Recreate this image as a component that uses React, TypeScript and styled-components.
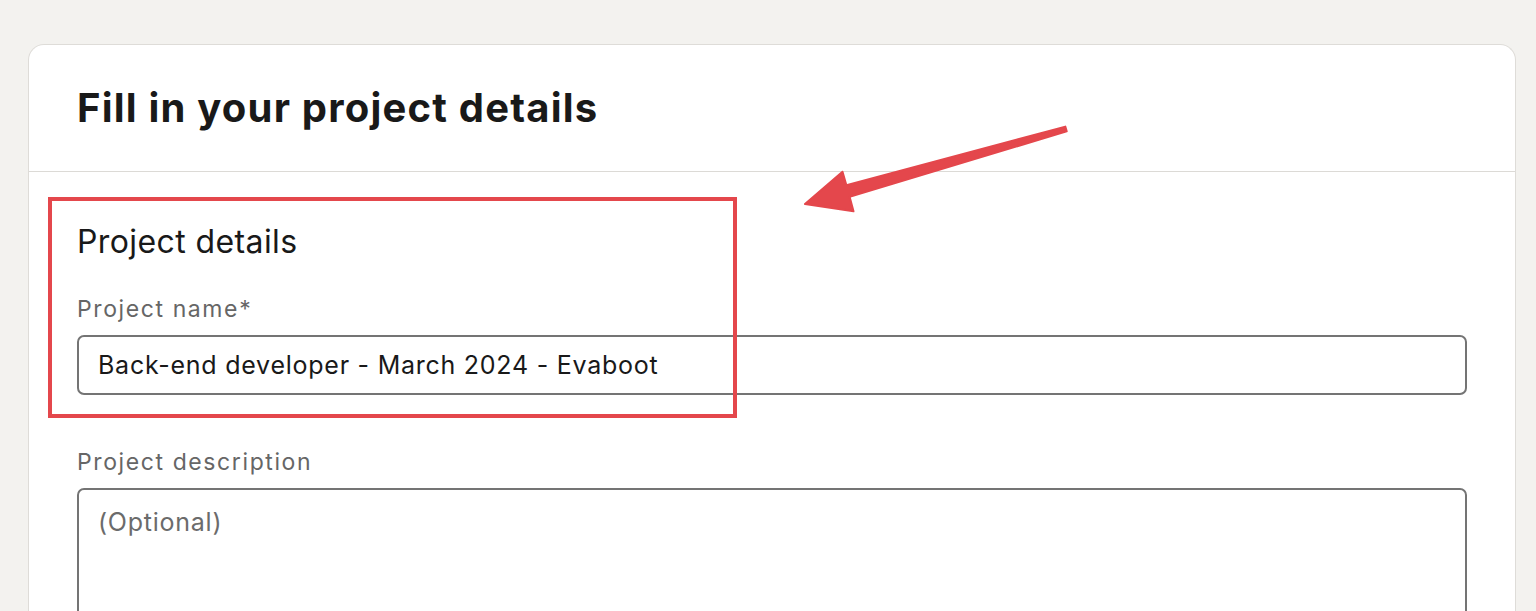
import React from 'react';
import styled, { createGlobalStyle } from 'styled-components';

const GlobalStyle = createGlobalStyle`
  html, body {
    margin: 0;
    padding: 0;
    background: #f3f2ef;
    font-family: Inter, "Noto Sans", "Liberation Sans", sans-serif;
    color: #191919;
  }
  body {
    height: 611px;
    overflow: hidden;
  }
`;

const Page = styled.div`
  position: relative;
  padding: 44px 20px 0 28px;
  height: 611px;
  box-sizing: border-box;
  overflow: hidden;
`;

const Card = styled.div`
  background: #fff;
  border: 1px solid #dedcd8;
  border-bottom: none;
  border-radius: 16px 16px 0 0;
  min-height: 100%;
  box-sizing: border-box;
  display: flex;
  flex-direction: column;
`;

const CardHeader = styled.div`
  flex: none;
  height: 126px;
  display: flex;
  align-items: center;
  padding: 0 48px;
  border-bottom: 1px solid #dcdad6;
`;

const Title = styled.h1`
  margin: 0;
  font-size: 40px;
  line-height: 48px;
  font-weight: 700;
  letter-spacing: 1.2px;
  color: #191919;
`;

const CardBody = styled.div`
  padding: 50px 48px 0 48px;
  display: flex;
  flex-direction: column;
`;

const SectionTitle = styled.h2`
  margin: 0;
  font-size: 32px;
  line-height: 40px;
  font-weight: 400;
  letter-spacing: 0.4px;
  color: #191919;
`;

const Label = styled.label<{ $top: number }>`
  display: block;
  margin-top: ${(p) => p.$top}px;
  font-size: 23px;
  line-height: 28px;
  letter-spacing: 1.6px;
  color: #666666;
`;

const Field = styled.div<{ $height: number }>`
  flex: none;
  margin-top: 12px;
  height: ${(p) => p.$height}px;
  border: 2px solid #747474;
  border-radius: 7px;
  box-sizing: border-box;
  padding: 0 19px;
  display: flex;
  align-items: ${(p) => (p.$height > 80 ? 'flex-start' : 'center')};
  padding-top: ${(p) => (p.$height > 80 ? '17px' : '0')};
`;

const FieldText = styled.span<{ $muted?: boolean }>`
  font-size: 25px;
  line-height: 30px;
  letter-spacing: 0.75px;
  color: ${(p) => (p.$muted ? '#6b6b6b' : '#191919')};
`;

const Highlight = styled.div`
  position: absolute;
  left: 48px;
  top: 197px;
  width: 689px;
  height: 221px;
  border: 4px solid #e4474c;
  box-sizing: border-box;
  pointer-events: none;
`;

const ArrowLayer = styled.svg`
  position: absolute;
  left: 0;
  top: 0;
  pointer-events: none;
`;

const Arrow = () => (
  <ArrowLayer width="1536" height="611" viewBox="0 0 1536 611">
    <polygon
      points="1065.3,126.6 846.4,185.2 842.5,171.7 805,204 853.5,211.3 849.6,196.8 1066.7,131.4"
      fill="#e4474c"
      stroke="#e4474c"
      strokeWidth="2"
      strokeLinejoin="round"
    />
  </ArrowLayer>
);

export default function App() {
  return (
    <>
      <GlobalStyle />
      <Page>
        <Card>
          <CardHeader>
            <Title>Fill in your project details</Title>
          </CardHeader>
          <CardBody>
            <SectionTitle>Project details</SectionTitle>
            <Label $top={32.5}>Project name*</Label>
            <Field $height={60}>
              <FieldText>Back-end developer - March 2024 - Evaboot</FieldText>
            </Field>
            <Label $top={53}>Project description</Label>
            <Field $height={180}>
              <FieldText $muted>(Optional)</FieldText>
            </Field>
          </CardBody>
        </Card>
        <Highlight />
        <Arrow />
      </Page>
    </>
  );
}
